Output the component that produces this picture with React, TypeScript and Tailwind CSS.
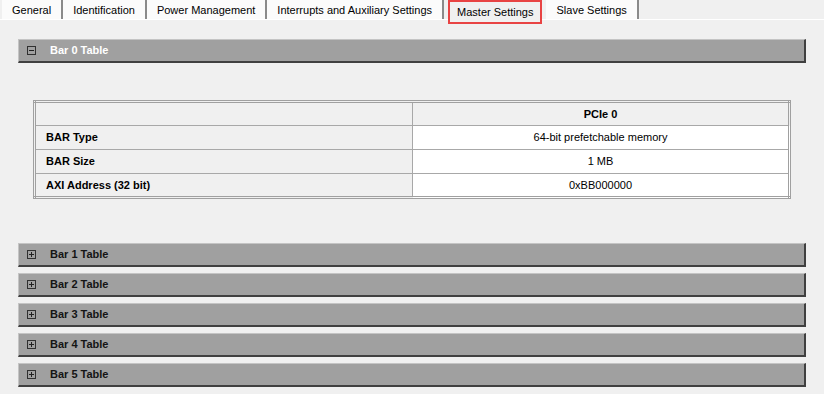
import { useState } from "react";

const tabs = [
  "General",
  "Identification",
  "Power Management",
  "Interrupts and Auxiliary Settings",
  "Master Settings",
  "Slave Settings",
];

const rows = [
  { label: "BAR Type", value: "64-bit prefetchable memory" },
  { label: "BAR Size", value: "1 MB" },
  { label: "AXI Address (32 bit)", value: "0xBB000000" },
];

function ToggleIcon({ open }: { open: boolean }) {
  return (
    <svg width="9" height="9" viewBox="0 0 9 9" className="shrink-0">
      <rect x="0.5" y="0.5" width="8" height="8" fill="none" stroke="#303030" />
      <line x1="2" y1="4.5" x2="7" y2="4.5" stroke="#202020" />
      {!open ? <line x1="4.5" y1="2" x2="4.5" y2="7" stroke="#202020" /> : null}
    </svg>
  );
}

function SectionHeader({ title, open }: { title: string; open: boolean }) {
  return (
    <div className="flex h-[24px] items-center border-l border-t border-[#c4c4c4] border-b-2 border-r-2 border-b-[#404040] border-r-[#404040] bg-[#a0a0a0] pl-[8px]">
      <ToggleIcon open={open} />
      <span
        className={`ml-[14px] text-[11px] font-bold ${open ? "text-white" : "text-[#141414]"}`}
      >
        {title}
      </span>
    </div>
  );
}

export default function App() {
  const [active] = useState("Master Settings");

  return (
    <div
      className="h-[394px] w-[824px] overflow-hidden bg-[#f0f0f0] text-[11px] text-black"
      style={{ fontFamily: "Tahoma, 'Liberation Sans', Arial, sans-serif" }}
    >
      <div className="flex h-[20px] items-start border-b border-white pl-[2px]">
        {tabs.map((tab) => {
          const selected = tab === active;
          return selected ? (
            <div
              key={tab}
              className="relative z-10 mx-[4px] flex h-[24px] items-start border-2 border-[#e84343] bg-[#f0f0f0] px-[7px] pt-[2px]"
            >
              {tab}
            </div>
          ) : (
            <div
              key={tab}
              className="flex h-[19px] items-center border-r-2 border-r-[#8a8a8a] bg-[#fbfbfb] px-[10px] pt-[2px]"
            >
              {tab}
            </div>
          );
        })}
      </div>

      <div className="px-[18px] pt-[19px]">
        <SectionHeader title="Bar 0 Table" open />

        <div className="px-[15px] pb-[44px] pt-[37px]">
          <table className="w-full border-collapse border-[3px] border-double border-[#a0a0a0]">
            <tbody>
              <tr className="h-[24px] bg-[#f0f0f0]">
                <td className="w-[378px] border border-[#a8a8a8]" />
                <td className="border border-[#a8a8a8] text-center font-bold">PCIe 0</td>
              </tr>
              {rows.map((row) => (
                <tr key={row.label} className="h-[24px]">
                  <td className="border border-[#a8a8a8] bg-[#f0f0f0] pl-[10px] font-bold">
                    {row.label}
                  </td>
                  <td className="border border-[#a8a8a8] bg-white text-center">{row.value}</td>
                </tr>
              ))}
            </tbody>
          </table>
        </div>

        <div className="flex flex-col gap-[6px]">
          {[1, 2, 3, 4, 5].map((n) => (
            <SectionHeader key={n} title={`Bar ${n} Table`} open={false} />
          ))}
        </div>
      </div>
    </div>
  );
}
